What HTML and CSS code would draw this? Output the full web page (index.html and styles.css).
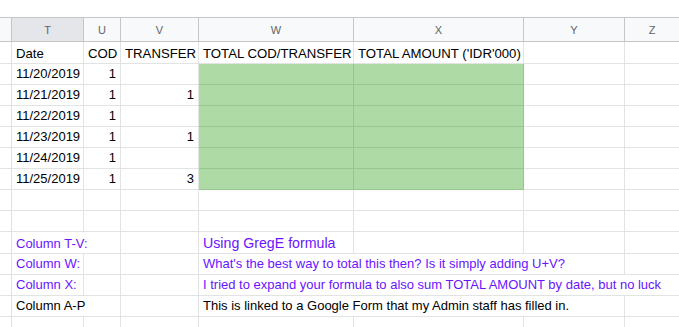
FILE: index.html
```html
<!DOCTYPE html>
<html>
<head>
<meta charset="utf-8">
<link rel="stylesheet" href="styles.css">
</head>
<body>
<div class="sheet">
  <!-- column headers -->
  <div class="ch corner"></div>
  <div class="ch sel">T</div>
  <div class="ch">U</div>
  <div class="ch">V</div>
  <div class="ch">W</div>
  <div class="ch">X</div>
  <div class="ch">Y</div>
  <div class="ch">Z</div>

  <!-- title row -->
  <div class="rh"></div>
  <div class="c r-title">Date</div>
  <div class="c r-title">COD</div>
  <div class="c r-title">TRANSFER</div>
  <div class="c r-title">TOTAL COD/TRANSFER</div>
  <div class="c r-title">TOTAL AMOUNT ('IDR'000)</div>
  <div class="c r-title"></div>
  <div class="c r-title"></div>

  <!-- data -->
  <div class="rh"></div><div class="c">11/20/2019</div><div class="c num">1</div><div class="c num"></div><div class="c g"></div><div class="c g"></div><div class="c"></div><div class="c"></div>
  <div class="rh"></div><div class="c">11/21/2019</div><div class="c num">1</div><div class="c num">1</div><div class="c g"></div><div class="c g"></div><div class="c"></div><div class="c"></div>
  <div class="rh"></div><div class="c">11/22/2019</div><div class="c num">1</div><div class="c num"></div><div class="c g"></div><div class="c g"></div><div class="c"></div><div class="c"></div>
  <div class="rh"></div><div class="c">11/23/2019</div><div class="c num">1</div><div class="c num">1</div><div class="c g"></div><div class="c g"></div><div class="c"></div><div class="c"></div>
  <div class="rh"></div><div class="c">11/24/2019</div><div class="c num">1</div><div class="c num"></div><div class="c g"></div><div class="c g"></div><div class="c"></div><div class="c"></div>
  <div class="rh"></div><div class="c">11/25/2019</div><div class="c num">1</div><div class="c num">3</div><div class="c g"></div><div class="c g"></div><div class="c"></div><div class="c"></div>

  <!-- empty rows -->
  <div class="rh"></div><div class="c"></div><div class="c"></div><div class="c"></div><div class="c"></div><div class="c"></div><div class="c"></div><div class="c"></div>
  <div class="rh"></div><div class="c"></div><div class="c"></div><div class="c"></div><div class="c"></div><div class="c"></div><div class="c"></div><div class="c"></div>

  <!-- notes -->
  <div class="rh"></div>
  <div class="c r-big purple span2">Column T-V:</div>
  <div class="c r-big"></div>
  <div class="c r-big purple big">Using GregE formula</div>
  <div class="c r-big"></div>
  <div class="c r-big"></div>
  <div class="c r-big"></div>

  <div class="rh"></div>
  <div class="c purple">Column W:</div>
  <div class="c"></div>
  <div class="c"></div>
  <div class="c purple span3">What's the best way to total this then? Is it simply adding U+V?</div>
  <div class="c"></div>

  <div class="rh"></div>
  <div class="c purple">Column X:</div>
  <div class="c"></div>
  <div class="c"></div>
  <div class="c purple span4">I tried to expand your formula to also sum TOTAL AMOUNT by date, but no luck</div>

  <div class="rh"></div>
  <div class="c span2">Column A-P</div>
  <div class="c"></div>
  <div class="c span3">This is linked to a Google Form that my Admin staff has filled in.</div>
  <div class="c"></div>

  <div class="rh last"></div><div class="c last"></div><div class="c last"></div><div class="c last"></div><div class="c last"></div><div class="c last"></div><div class="c last"></div><div class="c last"></div>
</div>
</body>
</html>
```

FILE: styles.css
```css
html, body {
  margin: 0;
  padding: 0;
  background: #ffffff;
  overflow: hidden;
}

.sheet {
  padding-top: 17px;
  display: grid;
  grid-template-columns: 12px 72px 37px 78px 155px 170px 101px 55px;
  grid-template-rows: 25px 22px repeat(8, 21px) 22px repeat(3, 21px) 10px;
  font-family: "Liberation Sans", Arial, sans-serif;
  font-size: 13px;
  color: #000;
}

.ch {
  box-sizing: border-box;
  background: #f8f9fa;
  border-top: 1px solid #c4c7c5;
  border-bottom: 1px solid #c4c7c5;
  border-right: 1px solid #c4c7c5;
  display: flex;
  align-items: center;
  justify-content: center;
  font-size: 11px;
  color: #5f6368;
}
.ch.sel {
  background: #e4e6e9;
}

.rh {
  border-right: 1px solid #dfe0e1;
  border-bottom: 1px solid #e2e3e3;
  background: #ffffff;
}

.c {
  box-sizing: border-box;
  border-right: 1px solid #e2e3e3;
  border-bottom: 1px solid #e2e3e3;
  display: flex;
  align-items: flex-end;
  padding: 0 3px 3px 4px;
  white-space: nowrap;
  overflow: visible;
  line-height: normal;
}

.last {
  border-bottom: none;
}

.num {
  justify-content: flex-end;
  padding-right: 4px;
}

.r-title {
  padding-bottom: 2px;
  font-size: 13.2px;
}

.r-big {
  padding-bottom: 2px;
}
.big {
  font-size: 14.2px;
}

.g {
  background: #aedaa5;
  border-right-color: #97c68f;
  border-bottom-color: #97c68f;
}

.purple {
  color: #6a14ff;
}

.span2 { grid-column: span 2; }
.span3 { grid-column: span 3; }
.span4 { grid-column: span 4; }
```
